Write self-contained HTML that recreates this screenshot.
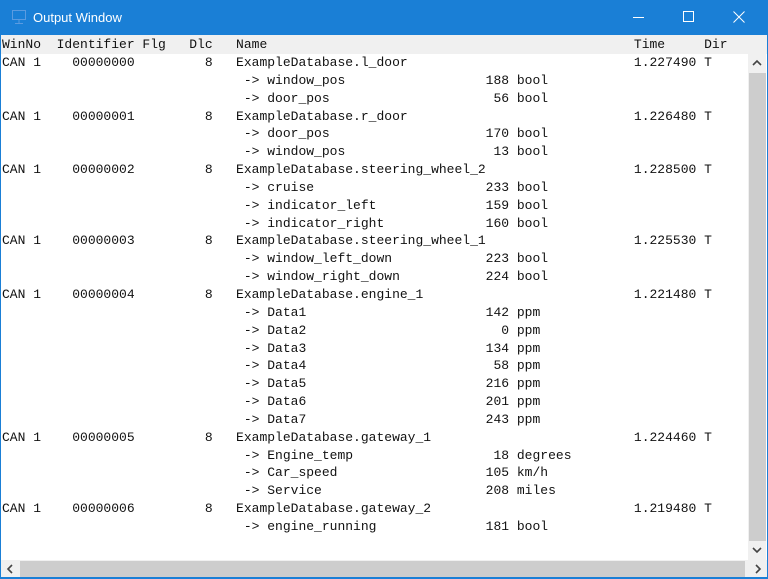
<!DOCTYPE html>
<html><head><meta charset="utf-8"><style>
*{margin:0;padding:0;box-sizing:border-box}
body{width:768px;height:579px;overflow:hidden;background:#fff;position:relative;font-family:"Liberation Mono",monospace;font-size:13px;color:#000}
.title{position:absolute;left:0;top:0;width:768px;height:35px;background:#1a7fd6;color:#fff;font-family:"Liberation Sans",sans-serif;font-size:13px}
.title .t{position:absolute;left:33px;top:10px}
.hdr{position:absolute;left:1px;top:35px;width:766px;height:19px;background:#f0f0f0}
pre{position:absolute;left:2px;font-family:"Liberation Mono",monospace;font-size:13px;line-height:17.85px;color:#111}
.bl{position:absolute;background:#1a7fd6}
.vs{position:absolute;left:748px;top:54px;width:18px;height:506px;background:#f0f0f0}
.vt{position:absolute;left:749px;top:73px;width:17px;height:468px;background:#cdcdcd}
.hs{position:absolute;left:1px;top:560px;width:766px;height:17px;background:#f0f0f0}
.ht{position:absolute;left:20px;top:561px;width:725px;height:16px;background:#cdcdcd}
</style></head><body>
<div class="title">
<svg style="position:absolute;left:11px;top:9px" width="16" height="16" viewBox="0 0 16 16"><rect x="1.5" y="1.5" width="13" height="9" fill="none" stroke="#5b9be0" stroke-width="1"/><path d="M8 11v3M4 14.5h8" stroke="#5b9be0"/></svg>
<span class="t">Output Window</span>
<svg style="position:absolute;left:633px;top:11px" width="12" height="12"><path d="M0 6.5h11" stroke="#fff"/></svg>
<svg style="position:absolute;left:683px;top:11px" width="12" height="12"><rect x="0.5" y="0.5" width="10" height="10" fill="none" stroke="#fff"/></svg>
<svg style="position:absolute;left:733px;top:11px" width="12" height="12"><path d="M0.5 0.5l11 11M11.5 0.5l-11 11" stroke="#fff"/></svg>
</div>
<div class="hdr"></div>
<pre style="top:36px">WinNo  Identifier Flg   Dlc   Name                                               Time     Dir</pre>
<pre style="top:54px">CAN 1    00000000         8   ExampleDatabase.l_door                             1.227490 T
                               -> window_pos                  188 bool
                               -> door_pos                     56 bool
CAN 1    00000001         8   ExampleDatabase.r_door                             1.226480 T
                               -> door_pos                    170 bool
                               -> window_pos                   13 bool
CAN 1    00000002         8   ExampleDatabase.steering_wheel_2                   1.228500 T
                               -> cruise                      233 bool
                               -> indicator_left              159 bool
                               -> indicator_right             160 bool
CAN 1    00000003         8   ExampleDatabase.steering_wheel_1                   1.225530 T
                               -> window_left_down            223 bool
                               -> window_right_down           224 bool
CAN 1    00000004         8   ExampleDatabase.engine_1                           1.221480 T
                               -> Data1                       142 ppm
                               -> Data2                         0 ppm
                               -> Data3                       134 ppm
                               -> Data4                        58 ppm
                               -> Data5                       216 ppm
                               -> Data6                       201 ppm
                               -> Data7                       243 ppm
CAN 1    00000005         8   ExampleDatabase.gateway_1                          1.224460 T
                               -> Engine_temp                  18 degrees
                               -> Car_speed                   105 km/h
                               -> Service                     208 miles
CAN 1    00000006         8   ExampleDatabase.gateway_2                          1.219480 T
                               -> engine_running              181 bool</pre>
<div class="vs"></div><div class="vt"></div>
<svg style="position:absolute;left:752px;top:59px" width="10" height="8"><path d="M1 6l4-4 4 4" fill="none" stroke="#444" stroke-width="1.6"/></svg>
<svg style="position:absolute;left:752px;top:546px" width="10" height="8"><path d="M1 2l4 4 4-4" fill="none" stroke="#444" stroke-width="1.6"/></svg>
<div class="hs"></div><div class="ht"></div>
<svg style="position:absolute;left:6px;top:564px" width="8" height="10"><path d="M6 1l-4 4 4 4" fill="none" stroke="#444" stroke-width="1.6"/></svg>
<svg style="position:absolute;left:754px;top:564px" width="8" height="10"><path d="M2 1l4 4-4 4" fill="none" stroke="#444" stroke-width="1.6"/></svg>
<div class="bl" style="left:0;top:0;width:1px;height:579px"></div>
<div class="bl" style="right:0;top:0;width:1px;height:579px"></div>
<div class="bl" style="left:0;bottom:0;width:768px;height:2px"></div>
</body></html>
